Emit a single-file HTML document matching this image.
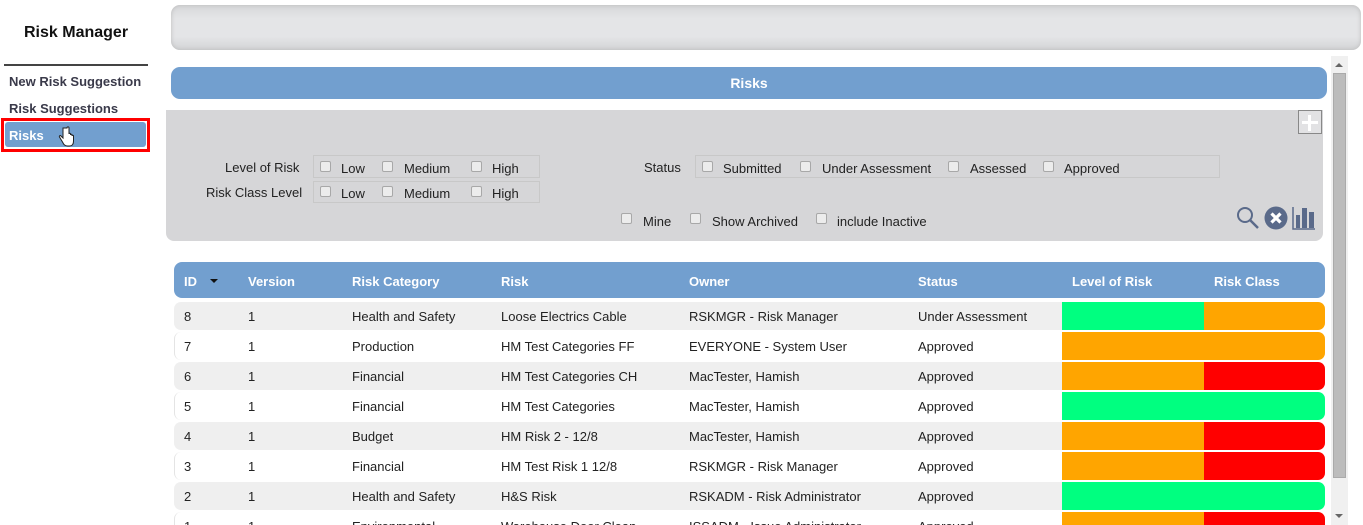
<!DOCTYPE html>
<html style="width:1363px;height:525px;overflow:hidden"><head><meta charset="utf-8"><style>
*{box-sizing:border-box;margin:0;padding:0}
body{width:1363px;height:525px;overflow:hidden;background:#fff;font-family:"Liberation Sans",sans-serif;font-size:13px;color:#222;position:relative}
.abs{position:absolute}
.nav{left:9px;font-weight:bold;color:#3a3a4a;font-size:13px}
.cb{position:absolute;width:11px;height:11px;border:1px solid #a8a8a8;border-radius:2px;background:#ececec}
.lbl{position:absolute;font-size:13px;color:#222}
.box{position:absolute;border:1px solid #c8c8c8}
.th{position:absolute;top:274px;color:#fff;font-weight:bold;font-size:13px}
.row{position:absolute;left:174px;width:888px;height:28px;border-radius:7px 0 0 7px}
.row.o{background:#efefef}
.row.e{background:#fff;border-left:1px solid #e4e4e4}
.c{position:absolute;font-size:13px}
.bar{position:absolute;left:1062px;width:263px;height:28px;border-radius:0 7px 7px 0;overflow:hidden}
</style></head><body>
<div class="abs" style="left:24px;top:24px;font-size:16px;font-weight:bold;color:#111">Risk Manager</div>
<div class="abs" style="left:4px;top:64px;width:144px;height:2px;background:#444"></div>
<div class="abs nav" style="top:74px">New Risk Suggestion</div>
<div class="abs nav" style="top:101px">Risk Suggestions</div>
<div class="abs" style="left:1px;top:118px;width:149px;height:34px;border:3px solid #f00"></div>
<div class="abs" style="left:5px;top:122px;width:141px;height:25px;background:#729fcf;border-radius:3px"></div>
<div class="abs nav" style="top:128px;color:#fff">Risks</div>
<svg class="abs" style="left:58px;top:126px" width="18" height="22" viewBox="0 0 18 22"><path d="M5 2v10l-2-2c-1-1-2 0-1.5 1l3 5c1 2 2 4 5 4h2c3 0 4-2 4-5v-5c0-1-1.5-1-1.5 0v-1c0-1-1.5-1-1.5 0v-1c0-1-1.5-1-1.5 0V2c0-1.5-2-1.5-2 0z" fill="#fff" stroke="#222" stroke-width="1"/></svg>

<div class="abs" style="left:171px;top:5px;width:1190px;height:45px;border-radius:9px;background:linear-gradient(#d6d7d9,#e4e5e7 30%,#e4e5e7 70%,#d3d4d6);box-shadow:inset 0 0 4px #bbb"></div>
<div class="abs" style="left:171px;top:67px;width:1156px;height:32px;border-radius:9px;background:#729fcf;color:#fff;font-weight:bold;font-size:14px;text-align:center;line-height:33px">Risks</div>

<div class="abs" style="left:166px;top:110px;width:1157px;height:131px;border-radius:0 0 8px 8px;background:#d6d6d8"></div>
<div class="abs" style="left:1298px;top:110px;width:24px;height:24px;border:1px solid #888;background:#e2e2e4"></div>
<div class="abs" style="left:1302px;top:121px;width:16px;height:3px;background:#fff"></div>
<div class="abs" style="left:1308px;top:115px;width:3px;height:16px;background:#fff"></div>

<div class="lbl" style="left:225px;top:160px">Level of Risk</div>
<div class="lbl" style="left:206px;top:185px">Risk Class Level</div>
<div class="box" style="left:313px;top:155px;width:227px;height:23px"></div>
<div class="box" style="left:313px;top:181px;width:227px;height:22px"></div>
<div class="cb" style="left:320px;top:161px"></div><div class="lbl" style="left:341px;top:161px">Low</div>
<div class="cb" style="left:382px;top:161px"></div><div class="lbl" style="left:404px;top:161px">Medium</div>
<div class="cb" style="left:471px;top:161px"></div><div class="lbl" style="left:492px;top:161px">High</div>
<div class="cb" style="left:320px;top:186px"></div><div class="lbl" style="left:341px;top:186px">Low</div>
<div class="cb" style="left:382px;top:186px"></div><div class="lbl" style="left:404px;top:186px">Medium</div>
<div class="cb" style="left:471px;top:186px"></div><div class="lbl" style="left:492px;top:186px">High</div>

<div class="lbl" style="left:644px;top:160px">Status</div>
<div class="box" style="left:695px;top:155px;width:525px;height:23px"></div>
<div class="cb" style="left:702px;top:161px"></div><div class="lbl" style="left:723px;top:161px">Submitted</div>
<div class="cb" style="left:800px;top:161px"></div><div class="lbl" style="left:822px;top:161px">Under Assessment</div>
<div class="cb" style="left:948px;top:161px"></div><div class="lbl" style="left:970px;top:161px">Assessed</div>
<div class="cb" style="left:1043px;top:161px"></div><div class="lbl" style="left:1064px;top:161px">Approved</div>

<div class="cb" style="left:621px;top:213px"></div><div class="lbl" style="left:643px;top:214px">Mine</div>
<div class="cb" style="left:690px;top:213px"></div><div class="lbl" style="left:712px;top:214px">Show Archived</div>
<div class="cb" style="left:816px;top:213px"></div><div class="lbl" style="left:837px;top:214px">include Inactive</div>

<svg class="abs" style="left:1236px;top:206px" width="24" height="24" viewBox="0 0 24 24"><circle cx="9" cy="9" r="7" fill="none" stroke="#5a6a8a" stroke-width="2"/><path d="M14 14l8 8" stroke="#5a6a8a" stroke-width="2.5"/></svg>
<svg class="abs" style="left:1264px;top:206px" width="24" height="24" viewBox="0 0 24 24"><circle cx="12" cy="12" r="11.5" fill="#5a6a8a"/><path d="M7.5 7.5l9 9M16.5 7.5l-9 9" stroke="#fff" stroke-width="3.2"/></svg>
<svg class="abs" style="left:1292px;top:206px" width="24" height="24" viewBox="0 0 24 24"><path d="M1 1v22h22" fill="none" stroke="#5a6a8a" stroke-width="1.5"/><rect x="4" y="9" width="4" height="13" fill="#5a6a8a"/><rect x="10" y="2" width="5" height="20" fill="#5a6a8a"/><rect x="17" y="6" width="5" height="16" fill="#5a6a8a"/></svg>

<div class="abs" style="left:174px;top:262px;width:1151px;height:36px;border-radius:8px;background:#729fcf"></div>
<div class="th" style="left:184px">ID</div>
<div class="abs" style="left:210px;top:279px;width:0;height:0;border-left:4px solid transparent;border-right:4px solid transparent;border-top:4px solid #111"></div>
<div class="th" style="left:248px">Version</div>
<div class="th" style="left:352px">Risk Category</div>
<div class="th" style="left:501px">Risk</div>
<div class="th" style="left:689px">Owner</div>
<div class="th" style="left:918px">Status</div>
<div class="th" style="left:1072px">Level of Risk</div>
<div class="th" style="left:1214px">Risk Class</div>

<div id="rows"></div>
<script>
var d=[["8","Health and Safety","Loose Electrics Cable","RSKMGR - Risk Manager","Under Assessment","#00ff80","#ffa500"],
["7","Production","HM Test Categories FF","EVERYONE - System User","Approved","#ffa500","#ffa500"],
["6","Financial","HM Test Categories CH","MacTester, Hamish","Approved","#ffa500","#ff0000"],
["5","Financial","HM Test Categories","MacTester, Hamish","Approved","#00ff80","#00ff80"],
["4","Budget","HM Risk 2 - 12/8","MacTester, Hamish","Approved","#ffa500","#ff0000"],
["3","Financial","HM Test Risk 1 12/8","RSKMGR - Risk Manager","Approved","#ffa500","#ff0000"],
["2","Health and Safety","H&amp;S Risk","RSKADM - Risk Administrator","Approved","#00ff80","#00ff80"],
["1","Environmental","Warehouse Door Clean","ISSADM - Issue Administrator","Approved","#ffa500","#ff0000"]];
var h="";
d.forEach(function(r,i){var y=302+i*30,t=y+7;
h+='<div class="row '+(i%2?'e':'o')+'" style="top:'+y+'px"></div>';
h+='<div class="c" style="left:184px;top:'+t+'px">'+r[0]+'</div><div class="c" style="left:248px;top:'+t+'px">1</div>';
h+='<div class="c" style="left:352px;top:'+t+'px">'+r[1]+'</div><div class="c" style="left:501px;top:'+t+'px">'+r[2]+'</div>';
h+='<div class="c" style="left:689px;top:'+t+'px">'+r[3]+'</div><div class="c" style="left:918px;top:'+t+'px">'+r[4]+'</div>';
h+='<div class="bar" style="top:'+y+'px;background:linear-gradient(90deg,'+r[5]+' 142px,'+r[6]+' 142px)"></div>';});
document.getElementById("rows").innerHTML=h;
</script>

<div class="abs" style="left:1331px;top:56px;width:17px;height:469px;background:#f0f0f0"></div>
<div class="abs" style="left:1335px;top:63px;width:0;height:0;border-left:4px solid transparent;border-right:4px solid transparent;border-bottom:4px solid #666"></div>
<div class="abs" style="left:1333px;top:73px;width:13px;height:405px;background:#bcbcbc;border:1px solid #aaa"></div>
<div class="abs" style="left:1335px;top:514px;width:0;height:0;border-left:4px solid transparent;border-right:4px solid transparent;border-top:4px solid #666"></div>
</body></html>
